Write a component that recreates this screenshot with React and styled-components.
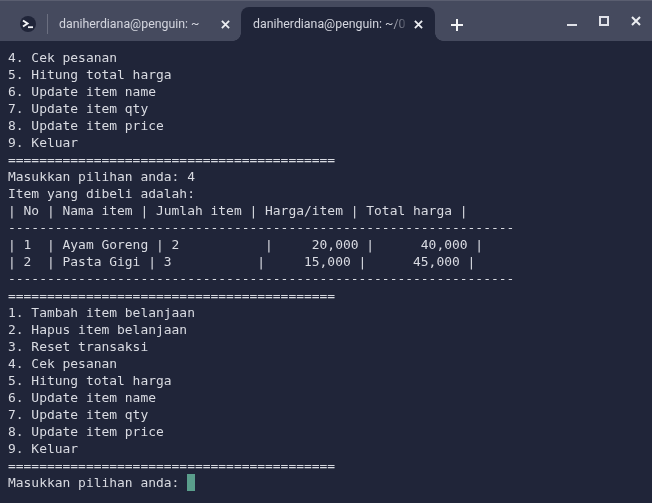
import React from 'react';
import styled, { createGlobalStyle } from 'styled-components';

const GlobalStyle = createGlobalStyle`
  html, body {
    margin: 0;
    padding: 0;
    background: #202539;
  }
`;

const Window = styled.div`
  width: 652px;
  height: 503px;
  display: flex;
  flex-direction: column;
  overflow: hidden;
  background: #202539;
`;

const TabStrip = styled.div`
  height: 41px;
  flex: none;
  display: flex;
  align-items: flex-end;
  background: #454a5e;
  border-top: 1px solid #5a5e70;
  box-sizing: border-box;
`;

const AppIcon = styled.div`
  width: 47px;
  height: 34px;
  flex: none;
  display: flex;
  align-items: center;
  justify-content: flex-end;
  padding-right: 11px;
  box-sizing: border-box;
`;

const Divider = styled.div`
  width: 1px;
  height: 20px;
  flex: none;
  margin-bottom: 7px;
  background: #6b6f80;
`;

const Tab = styled.div`
  position: relative;
  height: 34px;
  width: ${(p) => p.$width}px;
  flex: none;
  display: flex;
  align-items: center;
  box-sizing: border-box;
  padding: 0 ${(p) => p.$end}px 0 ${(p) => p.$inset}px;
  border-radius: 8px 8px 0 0;
  background: ${(p) => (p.$active ? '#202539' : 'transparent')};

  ${(p) =>
    p.$active &&
    `
    &::before,
    &::after {
      content: '';
      position: absolute;
      bottom: 0;
      width: 8px;
      height: 8px;
    }
    &::before {
      left: -8px;
      background: radial-gradient(circle at 0 0, transparent 7.5px, #202539 8px);
    }
    &::after {
      right: -8px;
      background: radial-gradient(circle at 100% 0, transparent 7.5px, #202539 8px);
    }
  `}
`;

const TabTitle = styled.span`
  flex: 1;
  min-width: 0;
  white-space: nowrap;
  font: 12.35px Roboto, sans-serif;
  color: #d4d6df;
  will-change: transform;
  ${(p) =>
    p.$fade &&
    `
    mask-image: linear-gradient(to right, #000 calc(100% - 26px), rgba(0, 0, 0, 0.25) calc(100% - 9px));
  `}
`;

const IconButton = styled.div`
  flex: none;
  display: flex;
  align-items: center;
  justify-content: center;
`;

const NewTab = styled(IconButton)`
  margin: 0 0 10px 16px;
`;

const WindowControls = styled.div`
  margin-left: auto;
  display: flex;
  align-self: flex-start;
  gap: 22px;
  padding: 15px 11px 0 0;
`;

const Screen = styled.pre`
  flex: 1;
  margin: 0;
  padding: 8px 0 0 8px;
  overflow: hidden;
  font-family: "DejaVu Sans Mono", monospace;
  font-size: 12.95px;
  line-height: 17px;
  color: #d9dbe2;
  will-change: transform;
`;

const Cursor = styled.span`
  display: inline-block;
  width: 8px;
  height: 17px;
  vertical-align: top;
  background: #5a9e8c;
`;

const CloseGlyph = ({ size = 9, weight = 2 }) => (
  <svg width={size} height={size} viewBox="0 0 10 10" fill="none" stroke="#eceef2" strokeWidth={weight}>
    <path d="M1 1l8 8M9 1l-8 8" />
  </svg>
);

const lines = `4. Cek pesanan
5. Hitung total harga
6. Update item name
7. Update item qty
8. Update item price
9. Keluar
==========================================
Masukkan pilihan anda: 4
Item yang dibeli adalah:
| No | Nama item | Jumlah item | Harga/item | Total harga |
-----------------------------------------------------------------
| 1  | Ayam Goreng | 2           |     20,000 |      40,000 |
| 2  | Pasta Gigi | 3           |     15,000 |      45,000 |
-----------------------------------------------------------------
==========================================
1. Tambah item belanjaan
2. Hapus item belanjaan
3. Reset transaksi
4. Cek pesanan
5. Hitung total harga
6. Update item name
7. Update item qty
8. Update item price
9. Keluar
==========================================
Masukkan pilihan anda: `;

export default function App() {
  return (
    <Window>
      <GlobalStyle />
      <TabStrip>
        <AppIcon>
          <svg width="16" height="16" viewBox="0 0 16 16">
            <circle cx="8" cy="8" r="8" fill="#202539" />
            <path d="M3 4.5L7.5 7.5L3 10.5" fill="none" stroke="#f2f3f6" strokeWidth="2" />
            <path d="M8 11.2h5" stroke="#f2f3f6" strokeWidth="1.8" />
          </svg>
        </AppIcon>
        <Divider />
        <Tab $width={193} $inset={11} $end={11}>
          <TabTitle>daniherdiana@penguin: ~</TabTitle>
          <IconButton>
            <CloseGlyph />
          </IconButton>
        </Tab>
        <Tab $active $width={194} $inset={12} $end={12}>
          <TabTitle $fade>daniherdiana@penguin: ~/0</TabTitle>
          <IconButton>
            <CloseGlyph />
          </IconButton>
        </Tab>
        <NewTab>
          <svg width="12" height="12" viewBox="0 0 12 12" stroke="#f4f5f7" strokeWidth="2">
            <path d="M6 0v12M0 6h12" />
          </svg>
        </NewTab>
        <WindowControls>
          <svg width="10" height="10" viewBox="0 0 10 10" stroke="#dfe1e8" strokeWidth="2">
            <path d="M0 9h10" />
          </svg>
          <svg width="10" height="10" viewBox="0 0 10 10" fill="none" stroke="#dfe1e8" strokeWidth="2">
            <rect x="1" y="1" width="8" height="8" />
          </svg>
          <CloseGlyph size={10} />
        </WindowControls>
      </TabStrip>
      <Screen>
        {lines}
        <Cursor />
      </Screen>
    </Window>
  );
}
